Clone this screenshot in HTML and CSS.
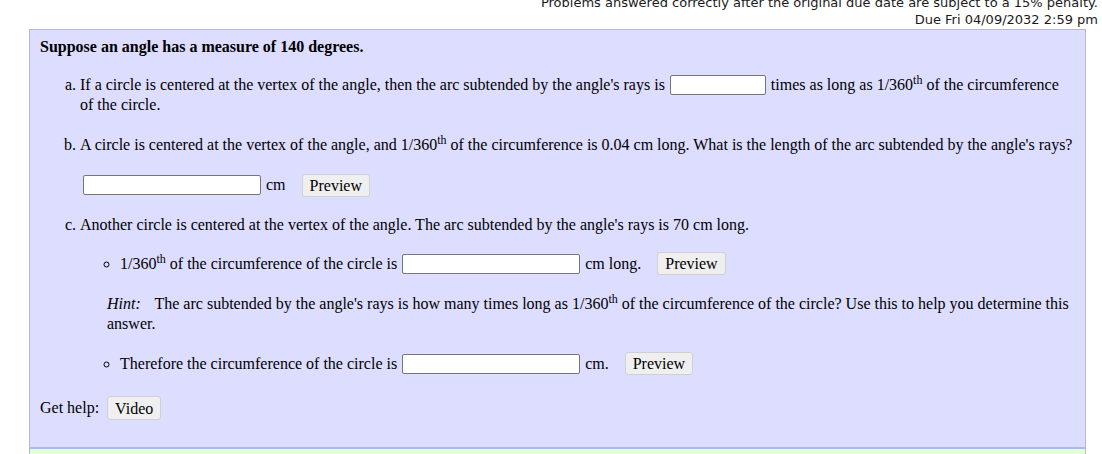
FILE: index.html
```html
<!DOCTYPE html>
<html>
<head>
<meta charset="utf-8">
<link rel="stylesheet" href="styles.css">
</head>
<body>
<div class="header">
  <div class="hline">Problems answered correctly after the original due date are subject to a 15% penalty.</div>
  <div class="hline">Due Fri 04/09/2032 2:59 pm</div>
</div>
<div class="problem">
  <p class="title">Suppose an angle has a measure of 140 degrees.</p>
  <ol class="parts">
    <li class="part part-a">If a circle is centered at the vertex of the angle, then the arc subtended by the angle's rays is <input class="ans small" type="text"> times as long as 1/360<sup>th</sup> of the circumference of the circle.</li>
    <li class="part">A circle is centered at the vertex of the angle, and 1/360<sup>th</sup> of the circumference is 0.04 cm long. What is the length of the arc subtended by the angle's rays?
      <div class="row first"><input class="ans wide" type="text"> cm <button class="btn">Preview</button></div>
    </li>
    <li class="part">Another circle is centered at the vertex of the angle. The arc subtended by the angle's rays is 70 cm long.
      <ul class="sub">
        <li class="subitem">1/360<sup>th</sup> of the circumference of the circle is <input class="ans wide" type="text"> cm long. <button class="btn">Preview</button>
          <p class="hint"><i class="hint-label">Hint:</i> The arc subtended by the angle's rays is how many times long as 1/360<sup>th</sup> of the circumference of the circle? Use this to help you determine this answer.</p>
        </li>
        <li class="subitem">Therefore the circumference of the circle is <input class="ans wide" type="text"> cm. <button class="btn">Preview</button></li>
      </ul>
    </li>
  </ol>
  <div class="help">Get help: <button class="btn video">Video</button></div>
</div>
<div class="next"></div>
</body>
</html>
```

FILE: styles.css
```css
html, body {
  margin: 0;
  padding: 0;
  background: #ffffff;
  overflow: hidden;
}
body {
  width: 1102px;
  height: 454px;
}
.header {
  margin-top: -6px;
  padding-right: 4px;
  text-align: right;
  font-family: "DejaVu Sans", Verdana, sans-serif;
  font-size: 13px;
  line-height: 17px;
  color: #1a1a1a;
}
.problem {
  margin: 1px 16px 0 29px;
  border: 1px solid #b6b6e2;
  background: #ddddff;
  padding: 7px 10px 9px 10px;
  font-family: "Liberation Serif", "Times New Roman", serif;
  font-size: 16px;
  line-height: 20px;
  color: #000;
}
.title {
  margin: 0;
  font-weight: bold;
}
sup {
  font-size: 12px;
  line-height: 0;
  vertical-align: 6px;
}
.parts {
  list-style-type: lower-alpha;
  margin: 18px 0 0 0;
  padding-left: 40px;
}
.part {
  margin-bottom: 20px;
}
.part-a {
  margin-right: 4px;
}
.part:last-child {
  margin-bottom: 0;
}
.row {
  margin-top: 20px;
  height: 20px;
  display: flex;
  align-items: center;
  white-space: pre;
}
.row.first {
  padding-left: 2px;
}
.ans {
  box-sizing: border-box;
  height: 20px;
  border: 1px solid #767676;
  border-radius: 2px;
  background: #fff;
  padding: 0 2px;
  margin: 0 1px;
  vertical-align: top;
  font-family: inherit;
  font-size: 13px;
}
.ans.small {
  width: 96px;
}
.ans.wide {
  width: 178px;
}
.btn {
  box-sizing: border-box;
  height: 23px;
  margin: -2px 0 -2px 12px;
  padding: 0 7px;
  border: 1px solid #d0d0d0;
  border-radius: 3px;
  background: #efefef;
  font-family: "Liberation Serif", "Times New Roman", serif;
  font-size: 16px;
  line-height: 21px;
  color: #000;
  vertical-align: top;
}
.sub {
  list-style-type: circle;
  margin: 19px 0 0 0;
  padding-left: 40px;
}
.subitem {
  margin-bottom: 20px;
}
.subitem:last-child {
  margin-bottom: 0;
}
.hint {
  margin: 20px 0 0 -13px;
}
.hint-label {
  margin-right: 10px;
}
.help {
  margin-top: 24px;
  margin-bottom: 20px;
}
.btn.video {
  margin-left: 4px;
  height: 24px;
}
.next {
  margin: 0 16px 0 29px;
  border: 1px solid #b6b6e2;
  border-bottom: none;
  background: #ddffdd;
  height: 20px;
}
```
